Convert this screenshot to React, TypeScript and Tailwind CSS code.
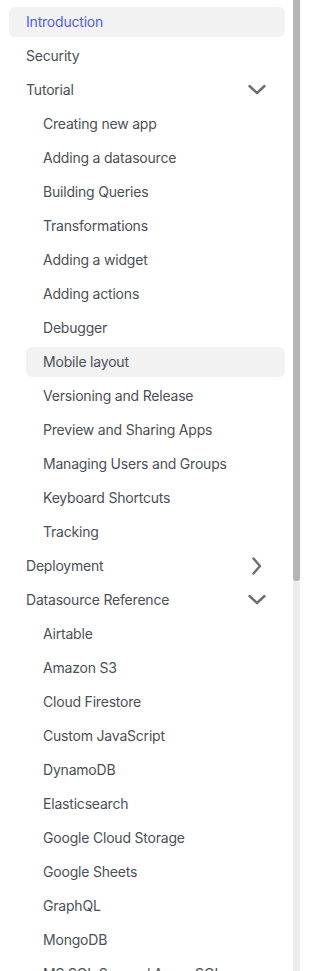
import React from "react";

type Item = {
  label: string;
  active?: boolean;
  highlighted?: boolean;
  chevron?: "down" | "right";
  children?: Item[];
};

const nav: Item[] = [
  { label: "Introduction", active: true },
  { label: "Security" },
  {
    label: "Tutorial",
    chevron: "down",
    children: [
      { label: "Creating new app" },
      { label: "Adding a datasource" },
      { label: "Building Queries" },
      { label: "Transformations" },
      { label: "Adding a widget" },
      { label: "Adding actions" },
      { label: "Debugger" },
      { label: "Mobile layout", highlighted: true },
      { label: "Versioning and Release" },
      { label: "Preview and Sharing Apps" },
      { label: "Managing Users and Groups" },
      { label: "Keyboard Shortcuts" },
      { label: "Tracking" },
    ],
  },
  { label: "Deployment", chevron: "right" },
  {
    label: "Datasource Reference",
    chevron: "down",
    children: [
      { label: "Airtable" },
      { label: "Amazon S3" },
      { label: "Cloud Firestore" },
      { label: "Custom JavaScript" },
      { label: "DynamoDB" },
      { label: "Elasticsearch" },
      { label: "Google Cloud Storage" },
      { label: "Google Sheets" },
      { label: "GraphQL" },
      { label: "MongoDB" },
      { label: "MS SQL Server / Azure SQL" },
      { label: "MySQL" },
      { label: "PostgreSQL" },
    ],
  },
];

function Chevron({ dir }: { dir: "down" | "right" }) {
  return (
    <svg
      width="20"
      height="20"
      viewBox="0 0 20 20"
      fill="none"
      stroke="#6e6e6e"
      strokeWidth="2.4"
      strokeLinecap="round"
      strokeLinejoin="round"
    >
      {dir === "down" ? (
        <path d="M2.5 6 L10 13 L17.5 6" />
      ) : (
        <path d="M6.5 2.5 L13 10 L6.5 17.5" />
      )}
    </svg>
  );
}

function Row({ item }: { item: Item }) {
  const bg = item.active || item.highlighted ? "bg-[#f2f2f2]" : "";
  const color = item.active ? "text-[#4e5ef6]" : "text-[#4b4f57]";
  return (
    <div
      className={`flex h-[30px] items-center justify-between rounded-md pl-[17px] pr-[18px] ${bg}`}
    >
      <span
        className={`whitespace-nowrap text-[14px] leading-[20px] tracking-[-0.2px] ${color}`}
      >
        {item.label}
      </span>
      {item.chevron && <Chevron dir={item.chevron} />}
    </div>
  );
}

export default function App() {
  return (
    <div
      className="flex h-[971px] w-[303px] overflow-hidden bg-white"
      style={{ fontFamily: "Inter, 'Noto Sans', sans-serif" }}
    >
      <nav className="flex min-w-0 flex-1 flex-col gap-1 pl-[9px] pr-2 pt-[7px]">
        {nav.map((item) => (
          <div key={item.label} className="flex flex-col gap-1">
            <Row item={item} />
            {item.children && (
              <div className="ml-[17px] flex flex-col gap-1">
                {item.children.map((c) => (
                  <Row key={c.label} item={c} />
                ))}
              </div>
            )}
          </div>
        ))}
      </nav>
      <div className="flex w-[7px] shrink-0 flex-col bg-[#ededed]">
        <div className="h-[581px] rounded-b-[3px] bg-[#b5b5b5]" />
      </div>
      <div className="w-[3px] shrink-0" />
    </div>
  );
}
